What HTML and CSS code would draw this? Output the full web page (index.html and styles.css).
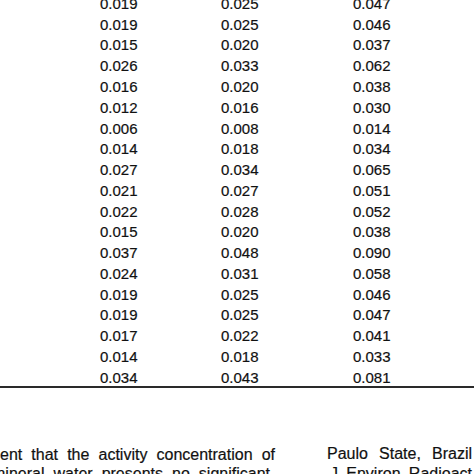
FILE: index.html
```html
<!DOCTYPE html>
<html>
<head>
<meta charset="utf-8">
<link rel="stylesheet" href="styles.css">
</head>
<body>
<div class="page">
  <div class="table">
    <div class="row"><span>0.019</span><span>0.025</span><span>0.047</span></div>
    <div class="row"><span>0.019</span><span>0.025</span><span>0.046</span></div>
    <div class="row"><span>0.015</span><span>0.020</span><span>0.037</span></div>
    <div class="row"><span>0.026</span><span>0.033</span><span>0.062</span></div>
    <div class="row"><span>0.016</span><span>0.020</span><span>0.038</span></div>
    <div class="row"><span>0.012</span><span>0.016</span><span>0.030</span></div>
    <div class="row"><span>0.006</span><span>0.008</span><span>0.014</span></div>
    <div class="row"><span>0.014</span><span>0.018</span><span>0.034</span></div>
    <div class="row"><span>0.027</span><span>0.034</span><span>0.065</span></div>
    <div class="row"><span>0.021</span><span>0.027</span><span>0.051</span></div>
    <div class="row"><span>0.022</span><span>0.028</span><span>0.052</span></div>
    <div class="row"><span>0.015</span><span>0.020</span><span>0.038</span></div>
    <div class="row"><span>0.037</span><span>0.048</span><span>0.090</span></div>
    <div class="row"><span>0.024</span><span>0.031</span><span>0.058</span></div>
    <div class="row"><span>0.019</span><span>0.025</span><span>0.046</span></div>
    <div class="row"><span>0.019</span><span>0.025</span><span>0.047</span></div>
    <div class="row"><span>0.017</span><span>0.022</span><span>0.041</span></div>
    <div class="row"><span>0.014</span><span>0.018</span><span>0.033</span></div>
    <div class="row"><span>0.034</span><span>0.043</span><span>0.081</span></div>
  </div>
  <div class="rule"></div>
  <div class="text">
    <div class="col-left">
      <div class="line first">ent that the activity concentration of</div>
      <div class="line second">mineral water presents no significant</div>
    </div>
    <div class="col-right">
      <div class="line">Paulo State, Brazil</div>
      <div class="line indent">J Environ Radioact</div>
    </div>
  </div>
</div>
</body>
</html>
```

FILE: styles.css
```css
html, body {
  margin: 0;
  padding: 0;
  background: #ffffff;
}
body {
  width: 474px;
  height: 474px;
  overflow: hidden;
  font-family: "Liberation Sans", Arial, sans-serif;
  color: #111111;
  -webkit-text-stroke: 0.2px #111111;
}
.page {
  display: flex;
  flex-direction: column;
}
.table {
  margin-top: -6.1px;
  padding-left: 100px;
  font-size: 15px;
  line-height: 20.77px;
}
.row {
  display: grid;
  grid-template-columns: 121px 132px auto;
}
.rule {
  height: 2px;
  margin-top: -2.5px;
  background: #2a2a2a;
}
.text {
  display: flex;
  align-items: flex-start;
  margin-top: 56.8px;
  font-size: 16px;
  white-space: nowrap;
}
.col-left {
  flex: none;
  width: 278px;
  margin-left: -8px;
  line-height: 19px;
}
.line {
  text-align: justify;
  text-align-last: justify;
}
.col-left .first {
  padding-left: 8px;
  width: 275px;
}
.col-right {
  flex: none;
  width: 145px;
  margin-left: 57px;
  margin-top: -0.5px;
  line-height: 20px;
}
.indent {
  padding-left: 3px;
}
```
